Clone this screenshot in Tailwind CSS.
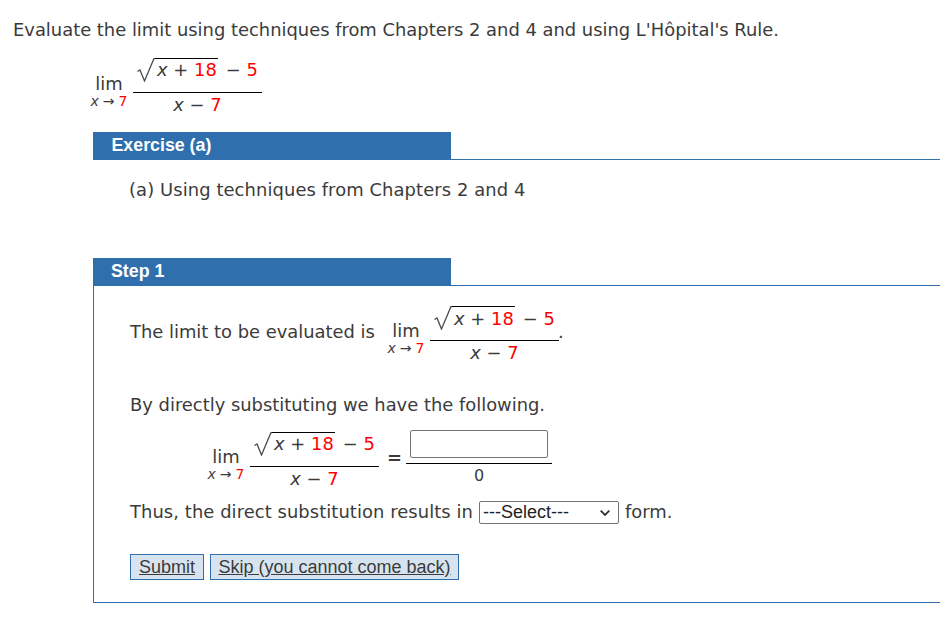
<!DOCTYPE html>
<html lang="en">
<head>
    <meta charset="UTF-8">
    <title>Evaluate the limit</title>
    <script src="https://cdn.jsdelivr.net/npm/@tailwindcss/browser@4"></script>
</head>
<body class="bg-white text-[#3b3b3b] font-['DejaVu_Sans',sans-serif] text-[17.9px] leading-[24px] overflow-hidden h-[620px]">
    <p class="pt-[18px] pl-[13px] whitespace-nowrap">Evaluate the limit using techniques from Chapters 2 and 4 and using L'Hôpital's Rule.</p>

    <!-- first limit -->
    <div class="flex items-center ml-[89px] mt-[14px] h-[62px] w-fit">
        <div class="flex flex-col items-center w-[40px] mr-[4px]">
            <span class="leading-[20px] mt-[8px]">lim</span>
            <span class="text-[14px] leading-[14px] whitespace-nowrap"><i>x</i><span class="mx-[4px]">→</span><span class="text-[#ff0000]">7</span></span>
        </div>
        <div class="flex flex-col items-center w-[129px]">
            <div class="flex items-start h-[35px] border-b-[1.5px] border-black w-full justify-center">
                <svg class="w-[18px] h-[24px] shrink-0" viewBox="0 0 18 24" fill="none" stroke="#4a4a4a"><path d="M0.5 13.5 L3 12 L7.5 23 L17 0.5 H18" stroke-width="1.3"/></svg>
                <span class="border-t-[1.5px] border-black leading-[21px] h-[24px] whitespace-nowrap pl-[2px] pr-[1px]"><i>x</i> + <span class="text-[#ff0000]">18</span></span>
                <span class="leading-[24px] whitespace-nowrap ml-[8px]">− <span class="text-[#ff0000]">5</span></span>
            </div>
            <span class="leading-[24px] whitespace-nowrap"><i>x</i> − <span class="text-[#ff0000]">7</span></span>
        </div>
    </div>

    <!-- exercise a -->
    <section class="ml-[93px] mt-[14px]">
        <div class="border-b border-[#2f6fad]">
            <h3 class="w-[358px] h-[27px] bg-[#2f6fad] text-white font-bold font-['Liberation_Sans',sans-serif] text-[17.8px] leading-[27px] pl-[18.5px]">Exercise (a)</h3>
        </div>
        <p class="pl-[36px] mt-[18px] tracking-[0.1px]">(a) Using techniques from Chapters 2 and 4</p>
    </section>

    <!-- step 1 -->
    <section class="ml-[93px] mt-[56px]">
        <div class="border-b border-[#2f6fad]">
            <h3 class="w-[358px] h-[27px] bg-[#2f6fad] text-white font-bold font-['Liberation_Sans',sans-serif] text-[17.8px] leading-[27px] pl-[18px]">Step 1</h3>
        </div>
        <div class="border-l border-b border-[#2f6fad] h-[317px] pl-[36px]">
            <div class="flex items-center pt-[18px] h-[80px]">
                <span class="whitespace-nowrap w-[256px] mb-[7px]">The limit to be evaluated is</span>
                <div class="flex flex-col items-center w-[40px] mr-[4px]">
                    <span class="leading-[20px] mt-[6px]">lim</span>
                    <span class="text-[14px] leading-[14px] whitespace-nowrap"><i>x</i><span class="mx-[4px]">→</span><span class="text-[#ff0000]">7</span></span>
                </div>
                <div class="flex flex-col items-center w-[129px]">
                    <div class="flex items-start h-[35px] border-b-[1.5px] border-black w-full justify-center">
                        <svg class="w-[18px] h-[24px] shrink-0" viewBox="0 0 18 24" fill="none" stroke="#4a4a4a"><path d="M0.5 13.5 L3 12 L7.5 23 L17 0.5 H18" stroke-width="1.3"/></svg>
                        <span class="border-t-[1.5px] border-black leading-[23px] h-[24px] whitespace-nowrap pl-[2px] pr-[1px]"><i>x</i> + <span class="text-[#ff0000]">18</span></span>
                        <span class="leading-[26px] whitespace-nowrap ml-[8px]">− <span class="text-[#ff0000]">5</span></span>
                    </div>
                    <span class="leading-[24px] whitespace-nowrap"><i>x</i> − <span class="text-[#ff0000]">7</span></span>
                </div>
                <span class="self-start mt-[16px] -ml-[1px]">.</span>
            </div>
            <p class="mt-[27px]">By directly substituting we have the following.</p>
            <div class="flex items-center ml-[76px] mt-[13px] h-[62px]">
                <div class="flex flex-col items-center w-[40px] mr-[4px]">
                    <span class="leading-[20px] mt-[6px]">lim</span>
                    <span class="text-[14px] leading-[14px] whitespace-nowrap"><i>x</i><span class="mx-[4px]">→</span><span class="text-[#ff0000]">7</span></span>
                </div>
                <div class="flex flex-col items-center w-[129px]">
                    <div class="flex items-start h-[35px] border-b-[1.5px] border-black w-full justify-center">
                        <svg class="w-[18px] h-[24px] shrink-0" viewBox="0 0 18 24" fill="none" stroke="#4a4a4a"><path d="M0.5 13.5 L3 12 L7.5 23 L17 0.5 H18" stroke-width="1.3"/></svg>
                        <span class="border-t-[1.5px] border-black leading-[21px] h-[24px] whitespace-nowrap pl-[2px] pr-[1px]"><i>x</i> + <span class="text-[#ff0000]">18</span></span>
                        <span class="leading-[24px] whitespace-nowrap ml-[8px]">− <span class="text-[#ff0000]">5</span></span>
                    </div>
                    <span class="leading-[24px] whitespace-nowrap"><i>x</i> − <span class="text-[#ff0000]">7</span></span>
                </div>
                <span class="mx-[8px] mb-[6px] w-[11px] text-center font-bold">=</span>
                <div class="self-start flex flex-col items-center w-[146px]">
                    <div class="w-full h-[34px] border-b-[1.5px] border-black flex justify-center">
                        <input type="text" class="w-[138px] h-[28px] border border-[#767676] rounded-[2px] bg-white">
                    </div>
                    <span class="text-[16px] leading-[23px]">0</span>
                </div>
            </div>
            <div class="flex items-center mt-[8px] whitespace-nowrap">
                <span class="w-[349px] tracking-[0.08px]">Thus, the direct substitution results in</span>
                <span class="relative mr-[6px]">
                    <select class="block w-[140px] h-[23px] pl-[3px] border border-[#767676] rounded-[2px] bg-white text-[#222] font-['Liberation_Sans',sans-serif] text-[18px] leading-[21px] appearance-none"><option>---Select---</option></select>
                    <svg class="absolute right-[9px] top-[9px] w-[10px] h-[6px]" viewBox="0 0 10 6" fill="none" stroke="#333" stroke-width="1.8"><path d="M0.7 0.7 L5 5 L9.3 0.7"/></svg>
                </span>
                <span>form.</span>
            </div>
            <div class="flex gap-[6px] mt-[30px] font-['Liberation_Sans',sans-serif] text-[18px]">
                <button class="w-[74px] h-[26px] bg-[#d7e4f0] border border-[#2f6fad] underline leading-[22px]">Submit</button>
                <button class="w-[249px] h-[26px] bg-[#d7e4f0] border border-[#2f6fad] underline leading-[22px] whitespace-nowrap">Skip (you cannot come back)</button>
            </div>
        </div>
    </section>
</body>
</html>
